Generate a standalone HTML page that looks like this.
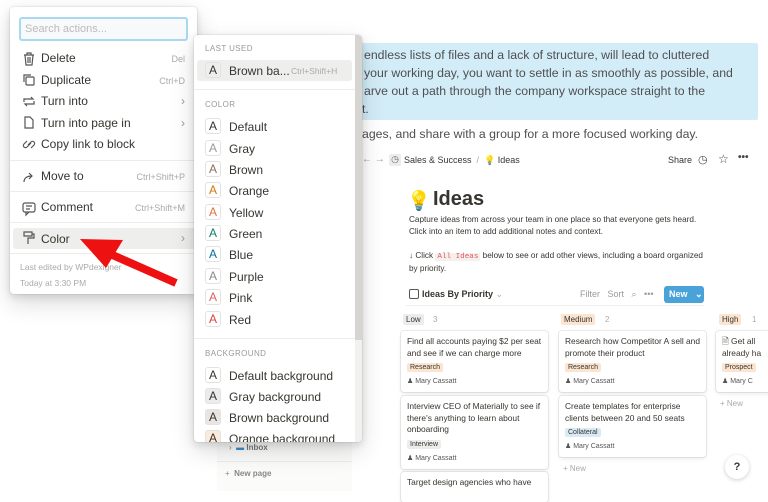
<!DOCTYPE html>
<html><head><meta charset="utf-8"><style>
*{margin:0;padding:0;box-sizing:border-box}
body{width:768px;height:491px;overflow:hidden;background:#fff;font-family:"Liberation Sans",sans-serif;position:relative;color:#37352f}
.a{position:absolute;white-space:nowrap}
.hl{position:absolute;left:355px;top:43px;width:403px;height:77px;background:#d3edf8;border-radius:2px}
.pt{font-size:12.3px;color:#4f4f4f}
.menu{position:absolute;left:10px;top:7px;width:187px;height:287px;background:#fff;border-radius:4px;box-shadow:0 0 0 1px rgba(15,15,15,.05),0 3px 8px rgba(15,15,15,.12),0 9px 24px rgba(15,15,15,.15)}
.mi{position:absolute;left:31px;font-size:12px;color:#37352f}
.sc{position:absolute;right:12px;font-size:9px;color:#aaa}
.div{position:absolute;left:0;height:1px;background:#ececeb}
.sub{position:absolute;left:194px;top:35px;width:168px;height:407px;background:#fff;border-radius:4px;box-shadow:0 0 0 1px rgba(15,15,15,.05),0 3px 8px rgba(15,15,15,.12),0 9px 24px rgba(15,15,15,.15);overflow:hidden}
.hd{position:absolute;left:11px;font-size:8px;color:#999;letter-spacing:.4px}
.sw{position:absolute;left:11px;width:16px;height:16px;border:1px solid #e3e2e0;border-radius:3px;font-size:12px;text-align:center;line-height:15px}
.sl{position:absolute;left:35px;font-size:12px;color:#37352f}
.card{position:absolute;background:#fff;border-radius:3px;box-shadow:0 0 0 1px rgba(15,15,15,.08),0 2px 4px rgba(15,15,15,.08)}
.ct{position:absolute;left:6px;font-size:8.4px;line-height:11.7px;color:#37352f;white-space:normal}
.tag{position:absolute;left:6px;font-size:7px;padding:1px 3px;border-radius:2px}
.au{position:absolute;left:6px;font-size:7px;color:#555}
.sm{font-size:9px;color:#37352f}
</style></head><body>

<div class="hl"></div>
<div class="a pt" style="left:364px;top:48px">endless lists of files and a lack of structure, will lead to cluttered</div>
<div class="a pt" style="left:364px;top:66px">your working day, you want to settle in as smoothly as possible, and</div>
<div class="a pt" style="left:364px;top:84px">arve out a path through the company workspace straight to the</div>
<div class="a pt" style="left:362px;top:102px">t.</div>
<div class="a pt" style="left:362px;top:127px">ages, and share with a group for a more focused working day.</div>

<div class="a" style="left:362px;top:154px;font-size:10px;color:#999">←  →</div>
<div class="a" style="left:389px;top:154px;width:12px;height:12px;background:#ececea;border-radius:2px;font-size:9px;text-align:center;color:#666">◷</div>
<div class="a sm" style="left:404px;top:155px">Sales &amp; Success&nbsp; <span style="color:#aaa">/</span>&nbsp; 💡 Ideas</div>
<div class="a sm" style="left:668px;top:155px">Share</div>
<div class="a" style="left:698px;top:153px;font-size:11px;color:#444">◷</div>
<div class="a" style="left:718px;top:152px;font-size:12px;color:#444">☆</div>
<div class="a" style="left:738px;top:152px;font-size:10px;color:#444;font-weight:bold">•••</div>
<div class="a" style="left:407px;top:189px;font-size:19px">💡</div>
<div class="a" style="left:433px;top:188px;font-size:20px;font-weight:bold;color:#37352f">Ideas</div>
<div class="a" style="left:409px;top:214px;font-size:8.2px;line-height:12px;color:#37352f">Capture ideas from across your team in one place so that everyone gets heard.<br>Click into an item to add additional notes and context.</div>
<div class="a" style="left:409px;top:250px;font-size:8.2px;line-height:12px;color:#37352f">↓ Click <span style="font-family:'Liberation Mono',monospace;color:#eb5757;background:#f2f1ee;padding:0 2px;font-size:7.6px">All Ideas</span> below to see or add other views, including a board organized<br>by priority.</div>
<div class="a" style="left:409px;top:289px;width:10px;height:10px;border:1.5px solid #555;border-radius:2px"></div>
<div class="a" style="left:422px;top:289px;font-size:9px;font-weight:bold;color:#37352f">Ideas By Priority <span style="color:#aaa;font-weight:normal">⌄</span></div>
<div class="a" style="left:580px;top:289px;font-size:9px;color:#999">Filter&nbsp;&nbsp; Sort&nbsp;&nbsp; ⌕&nbsp;&nbsp; •••</div>
<div class="a" style="left:664px;top:286px;width:40px;height:17px;background:#4aa3d8;border-radius:3px;color:#fff;font-size:9px;font-weight:bold;line-height:17px;padding-left:5px">New&nbsp;&nbsp; ⌄</div>
<div class="a" style="left:406px;top:305px;width:298px;height:1px;background:#eee"></div>

<div class="a" style="left:403px;top:314px;background:#ececea;font-size:8px;padding:1px 3px;border-radius:2px">Low</div>
<div class="a" style="left:433px;top:315px;font-size:8px;color:#aaa">3</div>
<div class="a" style="left:561px;top:314px;background:#fbe4d0;font-size:8px;padding:1px 3px;border-radius:2px">Medium</div>
<div class="a" style="left:605px;top:315px;font-size:8px;color:#aaa">2</div>
<div class="a" style="left:719px;top:314px;background:#fbe4d0;font-size:8px;padding:1px 3px;border-radius:2px">High</div>
<div class="a" style="left:752px;top:315px;font-size:8px;color:#aaa">1</div>

<div class="card" style="left:401px;top:331px;width:147px;height:61px"><div class="ct" style="top:5px;width:142px">Find all accounts paying $2 per seat and see if we can charge more</div><div class="tag" style="top:32px;background:#fbe4d0">Research</div><div class="au" style="top:46px">♟ Mary Cassatt</div></div>
<div class="card" style="left:401px;top:396px;width:147px;height:73px"><div class="ct" style="top:5px;width:142px">Interview CEO of Materially to see if there's anything to learn about onboarding</div><div class="tag" style="top:44px;background:#ececea">Interview</div><div class="au" style="top:58px">♟ Mary Cassatt</div></div>
<div class="card" style="left:401px;top:472px;width:147px;height:30px"><div class="ct" style="top:5px;width:142px">Target design agencies who have</div></div>
<div class="card" style="left:559px;top:331px;width:147px;height:61px"><div class="ct" style="top:5px;width:140px">Research how Competitor A sell and promote their product</div><div class="tag" style="top:32px;background:#fbe4d0">Research</div><div class="au" style="top:46px">♟ Mary Cassatt</div></div>
<div class="card" style="left:559px;top:396px;width:147px;height:61px"><div class="ct" style="top:5px;width:134px">Create templates for enterprise clients between 20 and 50 seats</div><div class="tag" style="top:32px;background:#d8ebf4">Collateral</div><div class="au" style="top:46px">♟ Mary Cassatt</div></div>
<div class="a" style="left:563px;top:464px;font-size:8px;color:#aaa">+ New</div>
<div class="card" style="left:716px;top:331px;width:60px;height:61px"><div class="ct" style="top:5px;width:60px">🗎 Get all already ha</div><div class="tag" style="top:32px;background:#fbe4d0">Prospect</div><div class="au" style="top:46px">♟ Mary C</div></div>
<div class="a" style="left:720px;top:399px;font-size:8px;color:#aaa">+ New</div>
<div class="a" style="left:725px;top:455px;width:24px;height:24px;border-radius:50%;background:#fff;box-shadow:0 1px 4px rgba(0,0,0,.2);text-align:center;line-height:24px;font-size:11px;font-weight:bold">?</div>

<div class="a" style="left:217px;top:440px;width:135px;height:51px;background:#fbfbfa"></div>
<div class="a" style="left:217px;top:461px;width:135px;height:1px;background:#ececea"></div>
<div class="a" style="left:229px;top:443px;font-size:8px;color:#888">›&nbsp; <span style="color:#3a8ad0">▬</span> <b style="color:#777">Inbox</b></div>
<div class="a" style="left:225px;top:469px;font-size:8px;color:#888">+&nbsp; <b style="color:#888">New page</b></div>

<div class="menu">
<div class="a" style="left:9px;top:10px;width:169px;height:24px;border:2px solid #a8d9ef;border-radius:3px;background:#f7f9fa;font-size:11px;color:#bbb;padding:4px 4px">Search actions...</div>
<div class="mi" style="top:44px">Delete</div><div class="sc" style="top:47px">Del</div>
<div class="mi" style="top:66px">Duplicate</div><div class="sc" style="top:69px">Ctrl+D</div>
<div class="mi" style="top:87px">Turn into</div><div class="sc" style="top:87px;font-size:12px;color:#999">›</div>
<div class="mi" style="top:109px">Turn into page in</div><div class="sc" style="top:109px;font-size:12px;color:#999">›</div>
<div class="mi" style="top:130px">Copy link to block</div>
<div class="div" style="top:153px;width:187px"></div>
<div class="mi" style="top:162px">Move to</div><div class="sc" style="top:165px">Ctrl+Shift+P</div>
<div class="div" style="top:184px;width:187px"></div>
<div class="mi" style="top:193px">Comment</div><div class="sc" style="top:196px">Ctrl+Shift+M</div>
<div class="div" style="top:215px;width:187px"></div>
<div class="a" style="left:3px;top:221px;width:184px;height:21px;background:#eeeeed;border-radius:3px"></div>
<div class="mi" style="top:225px">Color</div><div class="sc" style="top:224px;font-size:12px;color:#999">›</div>
<div class="div" style="top:246px;width:187px"></div>
<div class="a" style="left:10px;top:255px;font-size:8.5px;color:#aaa">Last edited by WPdexigner</div>
<div class="a" style="left:10px;top:271px;font-size:8.5px;color:#aaa">Today at 3:30 PM</div>
<svg class="a" style="left:12px;top:45px" width="14" height="100" viewBox="0 0 14 100" fill="none" stroke="#555" stroke-width="1.2">
<path d="M2 3h10M5 3V1h4v2M3 3l1 10h6l1-10M6 5v6M8 5v6"/>
<rect x="4" y="25" width="8" height="8" rx="1"/><path d="M2 30V23h7"/>
<path d="M2 50v-3h9l-2-2M12 49v3H3l2 2"/>
<path d="M3 65h5l3 3v8H3z"/>
<path d="M6 93l3-3a2 2 0 013 3l-3 3M8 92l-3 3a2 2 0 01-3-3l3-3M6 94l3-3"/>
</svg>
<svg class="a" style="left:12px;top:163px" width="14" height="14" fill="none" stroke="#555" stroke-width="1.2"><path d="M2 12c0-4 3-6 8-6M7 3l3 3-3 3"/></svg>
<svg class="a" style="left:12px;top:195px" width="14" height="50" fill="none" stroke="#555" stroke-width="1.2">
<rect x="1" y="1" width="12" height="9" rx="2"/><path d="M4 10v3l3-3M4 4h6M4 7h4"/>
<path d="M2 30h8v4H2zM10 32h2v4H6v3M6 39v3"/>
</svg>
</div>

<div class="sub">
<div class="a" style="right:0;top:0;width:7px;height:305px;background:#d6d5d1"></div>
<div class="a" style="right:0;top:305px;width:7px;height:102px;background:#f1f1ef"></div>
<div class="hd" style="top:9px">LAST USED</div>
<div class="a" style="left:3px;top:25px;width:155px;height:21px;background:#eeeeed;border-radius:3px"></div>
<div class="sw" style="top:27px;background:#eeeeed">A</div><div class="sl" style="top:29px">Brown ba...</div><div class="a" style="left:97px;top:31px;font-size:8.5px;color:#aaa">Ctrl+Shift+H</div>
<div class="div" style="top:54px;width:161px"></div>
<div class="hd" style="top:65px">COLOR</div>
<div class="sw" style="top:83px;color:#37352f">A</div><div class="sl" style="top:85px">Default</div>
<div class="sw" style="top:105px;color:#9b9a97">A</div><div class="sl" style="top:107px">Gray</div>
<div class="sw" style="top:126px;color:#8c6e5a">A</div><div class="sl" style="top:128px">Brown</div>
<div class="sw" style="top:147px;color:#d9730d">A</div><div class="sl" style="top:149px">Orange</div>
<div class="sw" style="top:169px;color:#e07040">A</div><div class="sl" style="top:171px">Yellow</div>
<div class="sw" style="top:190px;color:#0f7b6c">A</div><div class="sl" style="top:192px">Green</div>
<div class="sw" style="top:211px;color:#0b6e99">A</div><div class="sl" style="top:213px">Blue</div>
<div class="sw" style="top:233px;color:#8a8a8a">A</div><div class="sl" style="top:235px">Purple</div>
<div class="sw" style="top:254px;color:#e06060">A</div><div class="sl" style="top:256px">Pink</div>
<div class="sw" style="top:276px;color:#e03e3e">A</div><div class="sl" style="top:278px">Red</div>
<div class="div" style="top:303px;width:161px"></div>
<div class="hd" style="top:314px">BACKGROUND</div>
<div class="sw" style="top:332px">A</div><div class="sl" style="top:334px">Default background</div>
<div class="sw" style="top:353px;background:#ebeced">A</div><div class="sl" style="top:355px">Gray background</div>
<div class="sw" style="top:374px;background:#e9e5e3">A</div><div class="sl" style="top:376px">Brown background</div>
<div class="sw" style="top:395px;background:#faebdd">A</div><div class="sl" style="top:397px">Orange background</div>
</div>

<svg class="a" style="left:0;top:0" width="768" height="491">
<path d="M176 283L108 253" stroke="#ee1111" stroke-width="8" stroke-linecap="butt"/>
<path d="M80 239L123 240L106 268Z" fill="#ee1111"/>
</svg>
</body></html>
